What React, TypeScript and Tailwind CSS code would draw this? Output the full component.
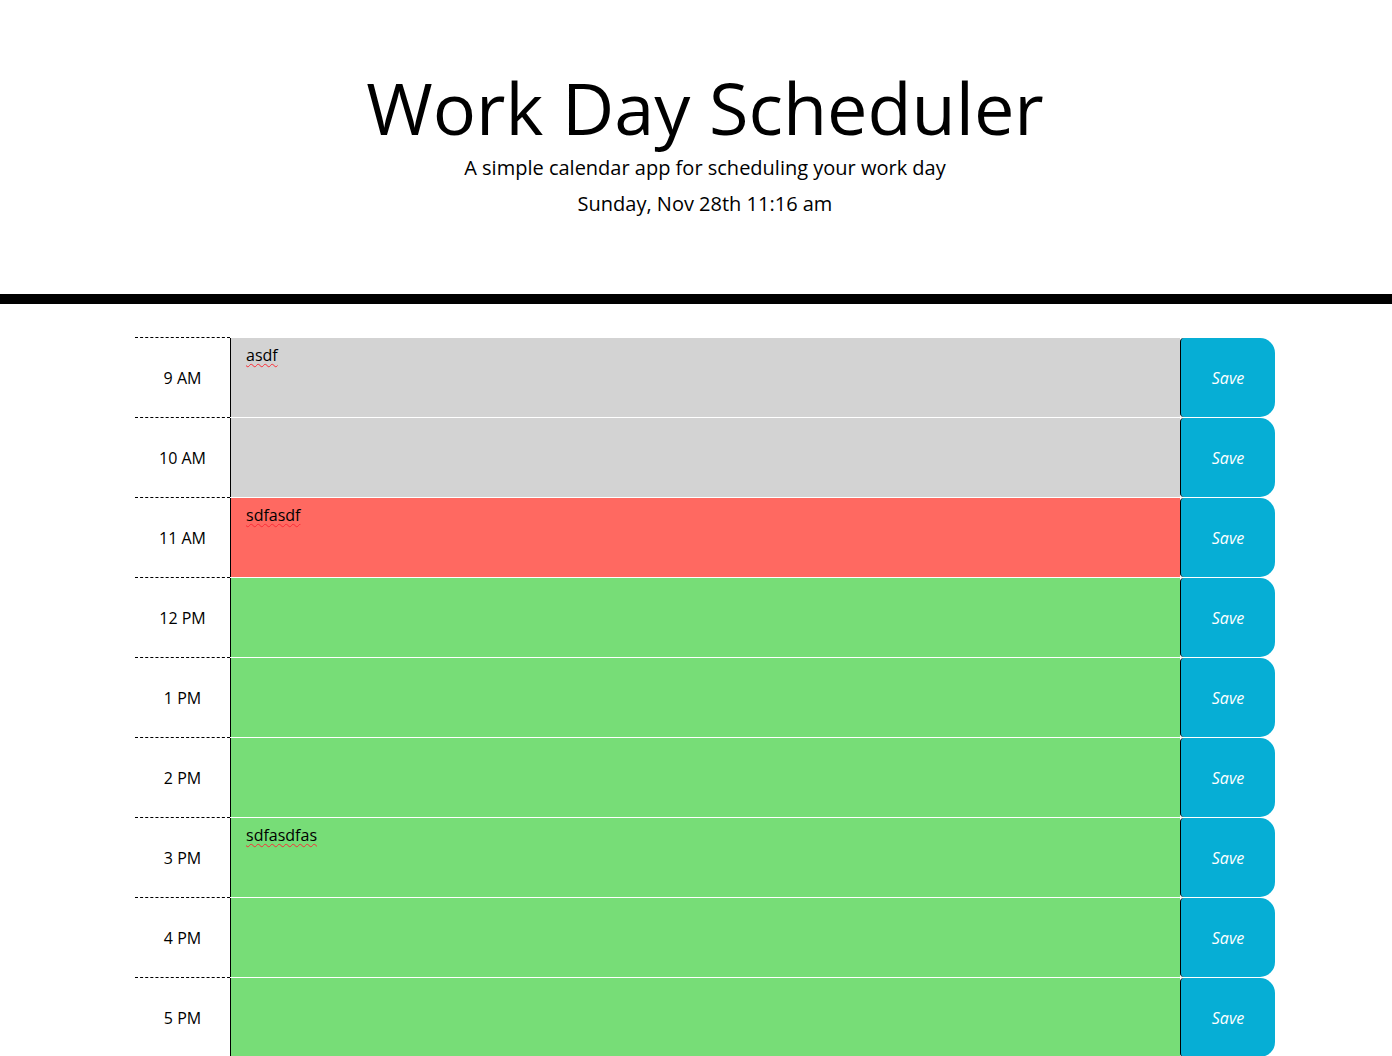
import React from "react";

type Tense = "past" | "present" | "future";

const slots: { hour: string; text: string; tense: Tense }[] = [
  { hour: "9 AM", text: "asdf", tense: "past" },
  { hour: "10 AM", text: "", tense: "past" },
  { hour: "11 AM", text: "sdfasdf", tense: "present" },
  { hour: "12 PM", text: "", tense: "future" },
  { hour: "1 PM", text: "", tense: "future" },
  { hour: "2 PM", text: "", tense: "future" },
  { hour: "3 PM", text: "sdfasdfas", tense: "future" },
  { hour: "4 PM", text: "", tense: "future" },
  { hour: "5 PM", text: "", tense: "future" },
];

const tenseBg: Record<Tense, string> = {
  past: "bg-[#d3d3d3]",
  present: "bg-[#ff6961]",
  future: "bg-[#77dd77]",
};

const TimeBlock = ({ hour, text, tense }: { hour: string; text: string; tense: Tense }) => (
  <div className="flex h-20 border-t border-white">
    {/* hour label */}
    <div className="-mt-px flex w-[95px] shrink-0 items-center justify-center border-t border-dashed border-black bg-white text-black">
      {hour}
    </div>
    {/* event text */}
    <div className={`flex-1 border-l border-black px-[15px] py-[5px] ${tenseBg[tense]}`}>
      {text && (
        <span className="text-black underline decoration-red-500 decoration-wavy decoration-1 underline-offset-2">
          {text}
        </span>
      )}
    </div>
    {/* save */}
    <button className="flex w-[95px] shrink-0 items-center justify-center rounded-l-[4px] rounded-r-[15px] border-l border-black bg-[#06aed5] italic text-white">
      Save
    </button>
  </div>
);

export default function App() {
  return (
    <div className="min-h-screen bg-white font-['Open_Sans',sans-serif] text-base text-black">
      {/* Jumbotron */}
      <header className="mb-[33px] border-b-[10px] border-black pb-[75px] pt-16">
        <div className="flex flex-col items-center pl-[18px] text-center">
          <h1 className="mb-[3px] text-[72px] font-normal leading-[1.2]">Work Day Scheduler</h1>
          <p className="text-[20px] font-normal leading-[1.5]">A simple calendar app for scheduling your work day</p>
          <p className="mt-[6px] text-[20px] font-normal leading-[1.5]">Sunday, Nov 28th 11:16 am</p>
        </div>
      </header>

      {/* Time blocks */}
      <main className="pl-[18px]">
        <div className="mx-auto w-[1140px]">
          {slots.map((s) => (
            <TimeBlock key={s.hour} {...s} />
          ))}
        </div>
      </main>
    </div>
  );
}
